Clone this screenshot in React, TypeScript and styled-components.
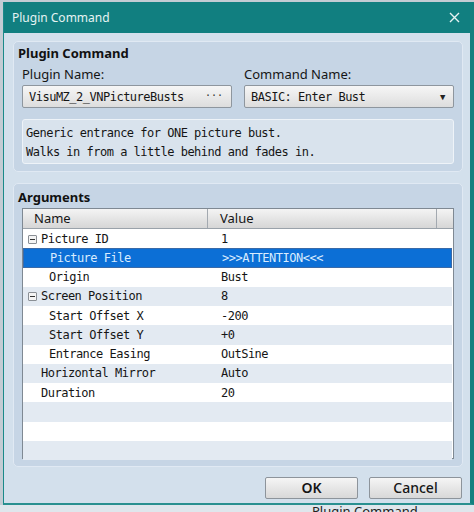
import styled, { createGlobalStyle } from "styled-components";

const GlobalStyle = createGlobalStyle`
    html, body {
        margin: 0;
        padding: 0;
        background: #c3ccd4;
        overflow: hidden;
    }
`;

const SANS = `"Noto Sans", "Open Sans", sans-serif`;
const MONO = `"DejaVu Sans Mono", "Liberation Mono", monospace`;

interface Arg {
    name: string;
    value: string;
    level: number;
    expander?: boolean;
    selected?: boolean;
}

const args: Arg[] = [
    { name: "Picture ID", value: "1", level: 0, expander: true },
    { name: "Picture File", value: ">>>ATTENTION<<<", level: 1, selected: true },
    { name: "Origin", value: "Bust", level: 1 },
    { name: "Screen Position", value: "8", level: 0, expander: true },
    { name: "Start Offset X", value: "-200", level: 1 },
    { name: "Start Offset Y", value: "+0", level: 1 },
    { name: "Entrance Easing", value: "OutSine", level: 1 },
    { name: "Horizontal Mirror", value: "Auto", level: 0 },
    { name: "Duration", value: "20", level: 0 },
    { name: "", value: "", level: 0 },
    { name: "", value: "", level: 0 },
    { name: "", value: "", level: 0 },
];

const Page = styled.div`
    width: 474px;
    height: 512px;
    display: flex;
    flex-direction: column;
    padding-top: 2px;
    box-sizing: border-box;
`;

const Window = styled.div`
    margin-left: 3px;
    width: 471px;
    height: 503px;
    box-sizing: border-box;
    display: flex;
    flex-direction: column;
    background: #d3e0ec;
    border-left: 1px solid #1a8a8a;
    border-right: 4px solid #14807f;
    border-bottom: 2px solid #2a9090;
`;

const TitleBar = styled.div`
    height: 31px;
    flex: none;
    background: #117f80;
    display: flex;
    align-items: center;
    justify-content: space-between;
    padding: 0 8px 0 8px;
    color: #e6f3f3;
    font-family: ${SANS};
    font-size: 12px;
`;

const CloseIcon = styled.svg`
    width: 11px;
    height: 11px;
    margin-right: 2px;
`;

const Body = styled.div`
    flex: 1;
    display: flex;
    flex-direction: column;
    padding: 8px 7px 0 9px;
`;

const Group = styled.div<{ $height: number }>`
    height: ${(p) => p.$height}px;
    box-sizing: border-box;
    background: #c6d5e5;
    border: 1px solid #e0e9f3;
    border-radius: 5px;
    padding: 0 8px 0 8px;
    display: flex;
    flex-direction: column;
    & + & {
        margin-top: 11px;
    }
`;

const GroupTitle = styled.div<{ $top: number }>`
    font-family: ${SANS};
    font-weight: bold;
    font-size: 13px;
    line-height: 16px;
    color: #111;
    margin: ${(p) => p.$top}px 0 0 -4px;
`;

const FieldRow = styled.div`
    display: flex;
    gap: 12px;
    margin-top: 5px;
`;

const Field = styled.div`
    flex: 1;
    display: flex;
    flex-direction: column;
`;

const Label = styled.div`
    font-family: ${SANS};
    font-size: 13px;
    line-height: 16px;
    color: #151515;
`;

const Select = styled.div`
    margin-top: 3px;
    height: 23px;
    box-sizing: border-box;
    border: 1px solid #8e969e;
    border-radius: 2px;
    background: linear-gradient(#f6f6f6, #dddddd);
    display: flex;
    align-items: center;
    justify-content: space-between;
    padding: 0 8px 0 6px;
    font-family: ${MONO};
    font-size: 12px;
    letter-spacing: -0.5px;
    color: #151515;
`;

const Ellipsis = styled.span`
    font-size: 10px;
    letter-spacing: 0;
    color: #333;
    margin-top: -3px;
`;

const Arrow = styled.span`
    font-size: 9px;
    color: #222;
`;

const Description = styled.div`
    margin-top: 11px;
    height: 45px;
    box-sizing: border-box;
    background: #d9e3ed;
    border: 1px solid #eef3f8;
    border-radius: 3px;
    padding: 4px 3px;
    font-family: ${MONO};
    font-size: 12px;
    letter-spacing: -0.5px;
    line-height: 19px;
    color: #151515;
    white-space: pre;
`;

const Table = styled.div`
    margin-top: 3px;
    height: 251px;
    box-sizing: border-box;
    border: 1px solid #7f8993;
    background: #ffffff;
    display: flex;
    flex-direction: column;
    font-family: ${MONO};
    font-size: 12px;
    letter-spacing: -0.5px;
    color: #151515;
`;

const Header = styled.div`
    height: 19px;
    flex: none;
    display: grid;
    grid-template-columns: 185px 229px 1fr;
    background: linear-gradient(#f4f4f4, #d6d6d6);
    border-bottom: 1px solid #9aa2aa;
`;

const HeaderCell = styled.div<{ $pad: number }>`
    font-family: ${SANS};
    font-size: 13px;
    letter-spacing: 0;
    line-height: 19px;
    padding-left: ${(p) => p.$pad}px;
    border-right: 1px solid #a3a9b0;
    &:last-child {
        border-right: none;
    }
`;

const Row = styled.div<{ $alt: boolean; $selected?: boolean }>`
    height: 19.25px;
    flex: none;
    box-sizing: border-box;
    display: grid;
    grid-template-columns: 185px 1fr;
    align-items: center;
    margin-right: 1px;
    background: ${(p) => (p.$selected ? "#0c6fd6" : p.$alt ? "#e3eaf2" : "#ffffff")};
    color: ${(p) => (p.$selected ? "#d9ecff" : "#151515")};
    border: ${(p) => (p.$selected ? "1px solid #3a6aa8" : "none")};
`;

const NameCell = styled.div<{ $level: number }>`
    display: flex;
    align-items: center;
    padding-left: ${(p) => (p.$level ? 26 : 18)}px;
    position: relative;
`;

const Expander = styled.span`
    position: absolute;
    left: 5px;
    top: 50%;
    margin-top: -4px;
    width: 7px;
    height: 7px;
    border: 1px solid #8a8f95;
    border-radius: 1px;
    background: #f4f4f4;
    display: flex;
    align-items: center;
    justify-content: center;
    &::after {
        content: "";
        width: 5px;
        height: 1px;
        background: #333;
    }
`;

const ValueCell = styled.div`
    padding-left: 13px;
`;

const Footer = styled.div`
    display: flex;
    justify-content: flex-end;
    gap: 11px;
    margin-top: 10px;
    padding-right: 1px;
`;

const Button = styled.button<{ $strong?: boolean }>`
    width: 93px;
    height: 22px;
    border: 1px solid #8d949b;
    border-radius: 2px;
    background: linear-gradient(#f5f5f5, #d8d8d8);
    font-family: ${SANS};
    font-size: 14px;
    font-weight: ${(p) => (p.$strong ? 600 : 500)};
    color: #151515;
    padding: 0;
    line-height: 20px;
`;

const Behind = styled.div`
    flex: 1;
    overflow: hidden;
    background: #dfe6ec;
    padding-left: 312px;
    font-family: ${SANS};
    font-size: 13px;
    line-height: 13px;
    color: #222;
`;

export default function App() {
    return (
        <Page>
            <GlobalStyle />
            <Window>
                <TitleBar>
                    <span>Plugin Command</span>
                    <CloseIcon viewBox="0 0 11 11">
                        <path d="M1 1 L10 10 M10 1 L1 10" stroke="#e6f3f3" strokeWidth="1.4" fill="none" />
                    </CloseIcon>
                </TitleBar>
                <Body>
                    <Group $height={131}>
                        <GroupTitle $top={3}>Plugin Command</GroupTitle>
                        <FieldRow>
                            <Field>
                                <Label>Plugin Name:</Label>
                                <Select>
                                    <span>VisuMZ_2_VNPictureBusts</span>
                                    <Ellipsis>···</Ellipsis>
                                </Select>
                            </Field>
                            <Field>
                                <Label>Command Name:</Label>
                                <Select>
                                    <span>BASIC: Enter Bust</span>
                                    <Arrow>▼</Arrow>
                                </Select>
                            </Field>
                        </FieldRow>
                        <Description>
                            {"Generic entrance for ONE picture bust.\nWalks in from a little behind and fades in."}
                        </Description>
                    </Group>
                    <Group $height={284}>
                        <GroupTitle $top={5}>Arguments</GroupTitle>
                        <Table>
                            <Header>
                                <HeaderCell $pad={11}>Name</HeaderCell>
                                <HeaderCell $pad={12}>Value</HeaderCell>
                                <HeaderCell $pad={0} />
                            </Header>
                            {args.map((a, k) => (
                                <Row key={k} $alt={k % 2 === 1} $selected={a.selected}>
                                    <NameCell $level={a.level}>
                                        {a.expander && <Expander />}
                                        {a.name}
                                    </NameCell>
                                    <ValueCell>{a.value}</ValueCell>
                                </Row>
                            ))}
                        </Table>
                    </Group>
                    <Footer>
                        <Button $strong>OK</Button>
                        <Button>Cancel</Button>
                    </Footer>
                </Body>
            </Window>
            <Behind>Plugin Command</Behind>
        </Page>
    );
}
